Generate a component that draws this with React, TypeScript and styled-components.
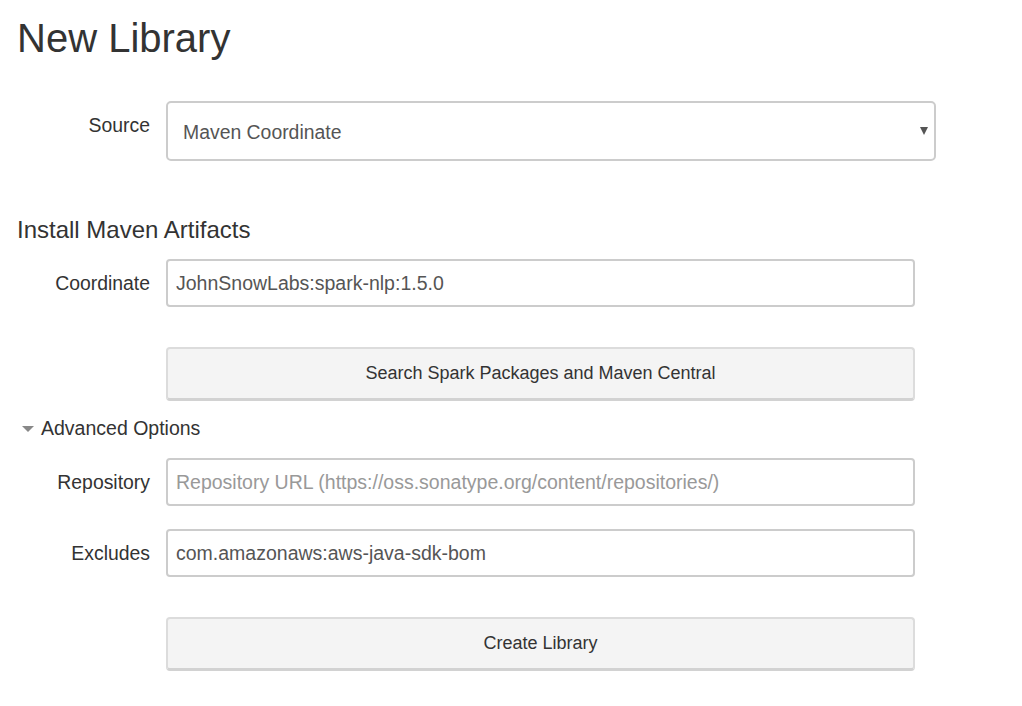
import React, { useState } from 'react'
import styled, { createGlobalStyle } from 'styled-components'

const GlobalStyle = createGlobalStyle`
  html, body {
    margin: 0;
    padding: 0;
    background: #fff;
  }
  body {
    font-family: 'Liberation Sans', Arial, sans-serif;
    color: #333;
  }
`

const Page = styled.div`
  padding: 16px 17px;
  display: flex;
  flex-direction: column;
`

const Title = styled.h1`
  margin: 0;
  font-size: 40px;
  line-height: 44px;
  font-weight: 400;
  color: #333;
`

const SectionTitle = styled.h2`
  margin: 55px 0 0;
  font-size: 24px;
  line-height: 27px;
  font-weight: 400;
  color: #333;
`

const FormRow = styled.div<{ $gap: number; $top?: boolean }>`
  display: grid;
  grid-template-columns: 133px auto;
  column-gap: 16px;
  align-items: ${props => props.$top ? 'start' : 'center'};
  margin-top: ${props => props.$gap}px;
`

const Label = styled.label<{ $offset?: number }>`
  text-align: right;
  font-size: 19.4px;
  line-height: 24px;
  color: #333;
  padding-top: ${props => props.$offset || 0}px;
`

const SelectWrap = styled.div`
  position: relative;
  width: 770px;
`

const Select = styled.select`
  appearance: none;
  width: 100%;
  height: 60px;
  box-sizing: border-box;
  border: 2px solid #ccc;
  border-radius: 5px;
  background: #fff;
  padding: 1px 15px 0;
  font-family: 'Liberation Sans', Arial, sans-serif;
  font-size: 19.4px;
  color: #555;
  outline: none;
`

const Caret = styled.span`
  position: absolute;
  right: 8px;
  top: 26px;
  width: 0;
  height: 0;
  border-left: 4px solid transparent;
  border-right: 4px solid transparent;
  border-top: 8px solid #555;
  pointer-events: none;
`

const TextInput = styled.input`
  width: 749px;
  height: 48px;
  box-sizing: border-box;
  border: 2px solid #ccc;
  border-radius: 4px;
  background: #fff;
  padding: 0 8px;
  font-family: 'Liberation Sans', Arial, sans-serif;
  font-size: 19.5px;
  color: #555;
  outline: none;

  &::placeholder {
    color: #999;
  }
`

const Button = styled.button`
  width: 749px;
  height: 54px;
  box-sizing: border-box;
  border: 2px solid #dcdcdc;
  border-bottom: 3px solid #d2d2d2;
  border-radius: 4px;
  background: #f4f4f4;
  font-family: 'Liberation Sans', Arial, sans-serif;
  font-size: 18px;
  color: #333;
  cursor: pointer;
  padding: 0;
`

const Toggle = styled.div`
  display: flex;
  align-items: center;
  gap: 7px;
  margin-top: 15px;
  padding-left: 5px;
  font-size: 19.5px;
  line-height: 25px;
  color: #333;
  cursor: pointer;
`

const ToggleCaret = styled.span<{ $open: boolean }>`
  width: 0;
  height: 0;
  border-left: 6px solid transparent;
  border-right: 6px solid transparent;
  border-top: 6px solid #888;
  transform: rotate(${props => props.$open ? '0deg' : '-90deg'});
`

export default function App() {
  const [source, setSource] = useState('maven')
  const [coordinate, setCoordinate] = useState('JohnSnowLabs:spark-nlp:1.5.0')
  const [repository, setRepository] = useState('')
  const [excludes, setExcludes] = useState('com.amazonaws:aws-java-sdk-bom')
  const [advanced, setAdvanced] = useState(true)

  return (
    <>
      <GlobalStyle />
      <Page>
        <Title>New Library</Title>

        <FormRow $gap={41} $top>
          <Label $offset={12}>Source</Label>
          <SelectWrap>
            <Select value={source} onChange={e => setSource(e.target.value)}>
              <option value="maven">Maven Coordinate</option>
              <option value="jar">Upload Java/Scala JAR</option>
              <option value="egg">Upload Python Egg</option>
              <option value="pypi">PyPI</option>
              <option value="cran">CRAN</option>
            </Select>
            <Caret />
          </SelectWrap>
        </FormRow>

        <SectionTitle>Install Maven Artifacts</SectionTitle>

        <FormRow $gap={16}>
          <Label>Coordinate</Label>
          <TextInput value={coordinate} onChange={e => setCoordinate(e.target.value)} />
        </FormRow>

        <FormRow $gap={40}>
          <span />
          <Button>Search Spark Packages and Maven Central</Button>
        </FormRow>

        <Toggle onClick={() => setAdvanced(!advanced)}>
          <ToggleCaret $open={advanced} />
          Advanced Options
        </Toggle>

        {advanced && (
          <>
            <FormRow $gap={17}>
              <Label>Repository</Label>
              <TextInput
                placeholder="Repository URL (https://oss.sonatype.org/content/repositories/)"
                value={repository}
                onChange={e => setRepository(e.target.value)}
              />
            </FormRow>
            <FormRow $gap={23}>
              <Label>Excludes</Label>
              <TextInput value={excludes} onChange={e => setExcludes(e.target.value)} />
            </FormRow>
          </>
        )}

        <FormRow $gap={40}>
          <span />
          <Button>Create Library</Button>
        </FormRow>
      </Page>
    </>
  )
}
